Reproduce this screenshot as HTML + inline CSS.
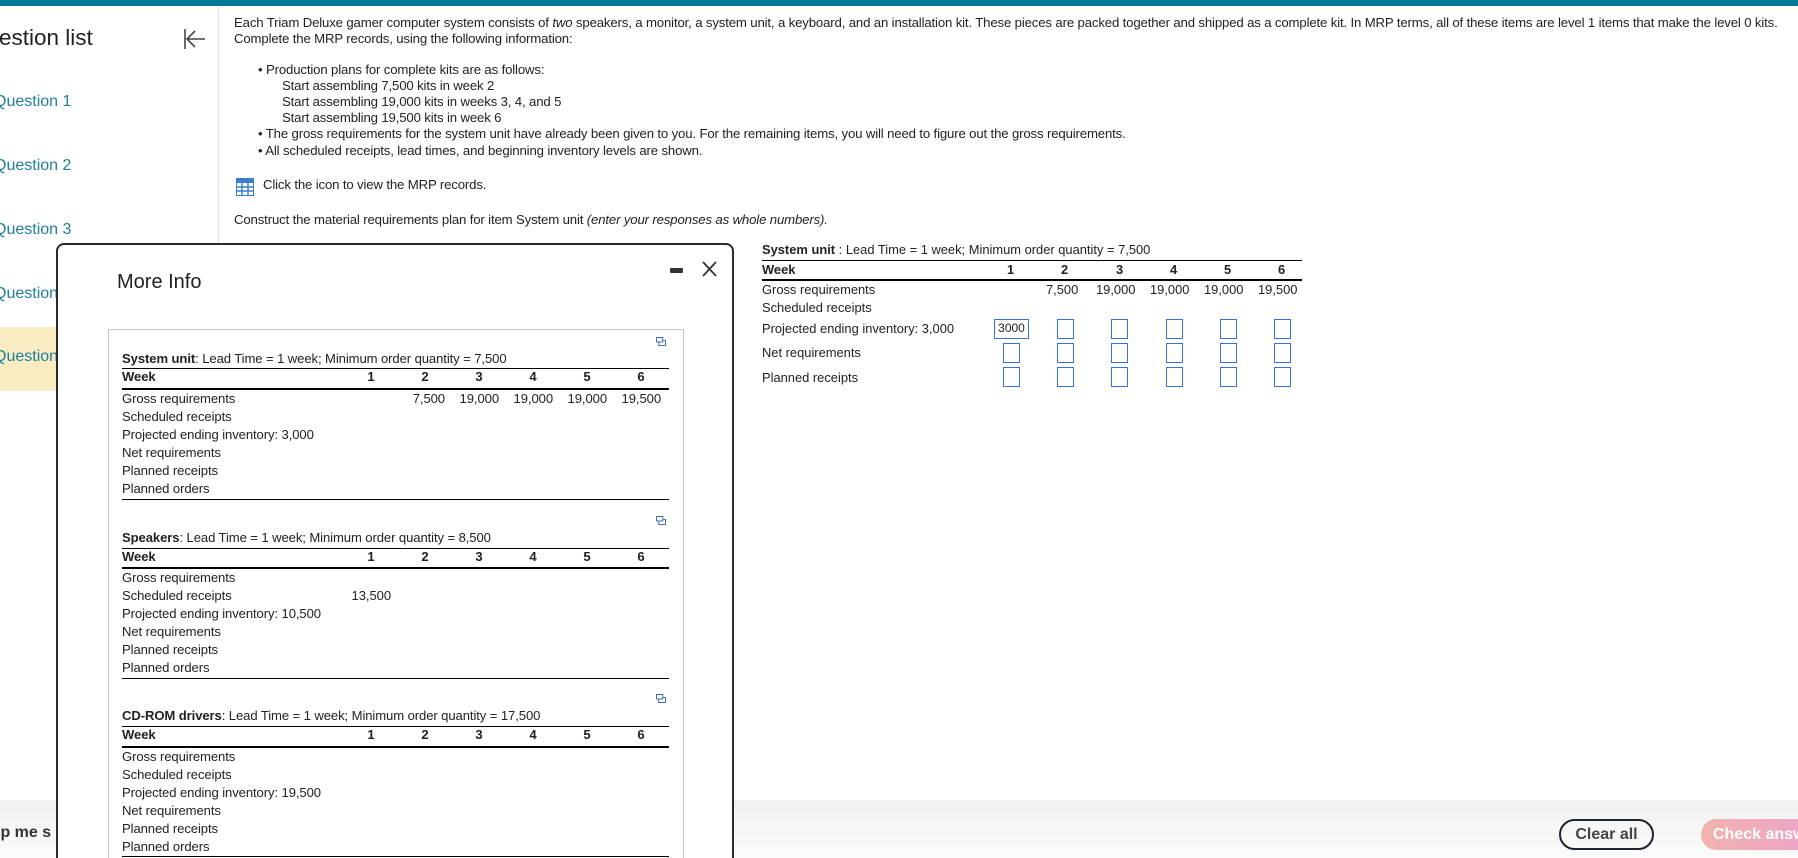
<!DOCTYPE html>
<html><head><meta charset="utf-8"><style>
*{margin:0;padding:0;box-sizing:border-box}
html,body{width:1798px;height:858px;overflow:hidden}
body{background:#fff;font-family:"Liberation Sans",Arial,sans-serif;color:#222;position:relative}
.a{position:absolute;white-space:nowrap}
.t13{font-size:13.2px;letter-spacing:-0.15px}
.q{font-size:16px;color:#1d7ea0;left:-6px}
.row{position:absolute;left:122px;width:539px;height:18px;font-size:13.1px;letter-spacing:-0.1px;display:grid;grid-template-columns:215px repeat(6,54px);line-height:18px}
.row span{text-align:right}
.wk span{text-align:center;padding-left:14px}
.wk{font-weight:bold}
.line{position:absolute;left:122px;width:547px;background:#000}
.ic{position:absolute;width:10px;height:9px}
.box{position:absolute;width:17px;height:20px;border:1.5px solid #3a6fd8;background:#fff}
.r{font-size:12.9px}
</style></head><body>
<div class="a" style="left:0;top:0;width:1798px;height:6px;background:#00789a"></div>
<div class="a" style="left:218px;top:6px;width:1px;height:794px;background:#dde"></div>
<div class="a" style="left:-1px;top:25px;font-size:22.5px;color:#222">estion list</div>
<svg class="a" style="left:183px;top:28px" width="24" height="22" viewBox="0 0 24 22"><path d="M2 1v20M22 11H5M12 3l-8 8 8 8" stroke="#444" stroke-width="1.6" fill="none"/></svg>
<div class="a q" style="top:93px">Question 1</div>
<div class="a q" style="top:157px">Question 2</div>
<div class="a q" style="top:221px">Question 3</div>
<div class="a q" style="top:285px">Question 4</div>
<div class="a" style="left:0;top:327px;width:70px;height:64px;background:#f8ecc0"></div>
<div class="a q" style="top:348px">Question 5</div>
<div class="a" style="left:0;top:800px;width:1798px;height:58px;background:linear-gradient(#f1f1f1,#fbfbfb)"></div>
<div class="a" style="left:-4px;top:824px;font-size:16px;font-weight:bold;color:#333">lp me s</div>
<div class="a" style="left:1559px;top:819px;width:95px;height:31px;border:2px solid #1f2330;border-radius:16px;font-size:16px;font-weight:bold;color:#444;text-align:center;line-height:27px">Clear all</div>
<div class="a" style="left:1701px;top:819px;width:120px;height:31px;border-radius:16px;background:linear-gradient(90deg,#f1b3ad,#eda2cc);font-size:16px;font-weight:bold;color:#fff;padding-left:12px;line-height:31px">Check answer</div>
<div class="a t13" style="left:234px;top:15px">Each Triam Deluxe gamer computer system consists of <i>two</i> speakers, a monitor, a system unit, a keyboard, and an installation kit. These pieces are packed together and shipped as a complete kit. In MRP terms, all of these items are level 1 items that make the level 0 kits.</div>
<div class="a t13" style="left:234px;top:31px">Complete the MRP records, using the following information:</div>
<div class="a t13" style="left:258px;top:62px">• Production plans for complete kits are as follows:</div>
<div class="a t13" style="left:282px;top:78px">Start assembling 7,500 kits in week 2</div>
<div class="a t13" style="left:282px;top:94px">Start assembling 19,000 kits in weeks 3, 4, and 5</div>
<div class="a t13" style="left:282px;top:110px">Start assembling 19,500 kits in week 6</div>
<div class="a t13" style="left:258px;top:126px">• The gross requirements for the system unit have already been given to you. For the remaining items, you will need to figure out the gross requirements.</div>
<div class="a t13" style="left:258px;top:143px">• All scheduled receipts, lead times, and beginning inventory levels are shown.</div>
<svg class="a" style="left:236px;top:178px" width="18" height="18" viewBox="0 0 18 18"><rect x="0.5" y="0.5" width="17" height="17" fill="#fff" stroke="#3a7bd5"/><rect x="0.5" y="0.5" width="17" height="4.5" fill="#3a7bd5"/><path d="M0 9h18M0 13h18M6 5v13M12 5v13" stroke="#3a7bd5" stroke-width="1.4"/></svg>
<div class="a t13" style="left:263px;top:177px">Click the icon to view the MRP records.</div>
<div class="a t13" style="left:234px;top:212px">Construct the material requirements plan for item System unit <i>(enter your responses as whole numbers).</i></div>
<div class="a r" style="left:762px;top:242px"><b>System unit</b> : Lead Time = 1 week; Minimum order quantity = 7,500</div>
<div class="a" style="left:762px;top:260px;width:540px;height:1px;background:#000"></div>
<div class="a" style="left:762px;top:279px;width:540px;height:2px;background:#000"></div>
<div class="a r" style="left:762px;top:262px;font-weight:bold">Week</div>
<div class="a r" style="left:1007px;top:262px;font-weight:bold">1</div>
<div class="a r" style="left:1061px;top:262px;font-weight:bold">2</div>
<div class="a r" style="left:1116px;top:262px;font-weight:bold">3</div>
<div class="a r" style="left:1170px;top:262px;font-weight:bold">4</div>
<div class="a r" style="left:1224px;top:262px;font-weight:bold">5</div>
<div class="a r" style="left:1278px;top:262px;font-weight:bold">6</div>
<div class="a r" style="left:762px;top:282px">Gross requirements</div>
<div class="a r" style="left:1046px;top:282px">7,500</div>
<div class="a r" style="left:1096px;top:282px">19,000</div>
<div class="a r" style="left:1150px;top:282px">19,000</div>
<div class="a r" style="left:1204px;top:282px">19,000</div>
<div class="a r" style="left:1258px;top:282px">19,500</div>
<div class="a r" style="left:762px;top:300px">Scheduled receipts</div>
<div class="a r" style="left:762px;top:321px">Projected ending inventory: 3,000</div>
<div class="a r" style="left:762px;top:345px">Net requirements</div>
<div class="a r" style="left:762px;top:370px">Planned receipts</div>
<div class="box" style="left:994px;top:319px;width:35px;font-size:12px;line-height:16px;text-align:center">3000</div>
<div class="box" style="left:1057px;top:319px"></div><div class="box" style="left:1111px;top:319px"></div><div class="box" style="left:1166px;top:319px"></div><div class="box" style="left:1220px;top:319px"></div><div class="box" style="left:1274px;top:319px"></div>
<div class="box" style="left:1003px;top:343px"></div><div class="box" style="left:1057px;top:343px"></div><div class="box" style="left:1111px;top:343px"></div><div class="box" style="left:1166px;top:343px"></div><div class="box" style="left:1220px;top:343px"></div><div class="box" style="left:1274px;top:343px"></div>
<div class="box" style="left:1003px;top:367px"></div><div class="box" style="left:1057px;top:367px"></div><div class="box" style="left:1111px;top:367px"></div><div class="box" style="left:1166px;top:367px"></div><div class="box" style="left:1220px;top:367px"></div><div class="box" style="left:1274px;top:367px"></div>
<div class="a" style="left:56px;top:243px;width:678px;height:640px;border:2px solid #2b2b2b;border-radius:8px;background:#fff"></div>
<div class="a" style="left:117px;top:271px;font-size:20px;color:#222">More Info</div>
<div class="a" style="left:670px;top:268px;width:13px;height:5px;background:#333;border-radius:1px"></div>
<svg class="a" style="left:702px;top:261px" width="15" height="16" viewBox="0 0 15 16"><path d="M1 1l13 14M14 1L1 15" stroke="#333" stroke-width="1.8"/></svg>
<div class="a" style="left:108px;top:329px;width:576px;height:560px;border:1px solid #c8c8c8"></div>
<svg class="ic" style="left:656px;top:337px" width="11" height="10" viewBox="0 0 11 10"><rect x="0.5" y="0.5" width="7" height="5" fill="#fff" stroke="#2c5fb5"/><path d="M3 6v3.5h7.5V4H8" stroke="#2c5fb5" fill="none"/></svg>
<svg class="ic" style="left:656px;top:516px" width="11" height="10" viewBox="0 0 11 10"><rect x="0.5" y="0.5" width="7" height="5" fill="#fff" stroke="#2c5fb5"/><path d="M3 6v3.5h7.5V4H8" stroke="#2c5fb5" fill="none"/></svg>
<svg class="ic" style="left:656px;top:694px" width="11" height="10" viewBox="0 0 11 10"><rect x="0.5" y="0.5" width="7" height="5" fill="#fff" stroke="#2c5fb5"/><path d="M3 6v3.5h7.5V4H8" stroke="#2c5fb5" fill="none"/></svg>
<div class="a" style="left:122px;top:351px;font-size:13.1px;letter-spacing:-0.1px"><b>System unit</b>: Lead Time = 1 week; Minimum order quantity = 7,500</div>
<div class="line" style="top:368px;height:1px"></div>
<div class="row wk" style="top:368px"><b style="text-align:left">Week</b><span>1</span><span>2</span><span>3</span><span>4</span><span>5</span><span>6</span></div>
<div class="line" style="top:388px;height:2px"></div>
<div class="row" style="top:390px"><div>Gross requirements</div><span></span><span>7,500</span><span>19,000</span><span>19,000</span><span>19,000</span><span>19,500</span></div>
<div class="row" style="top:408px"><div>Scheduled receipts</div></div>
<div class="row" style="top:426px"><div>Projected ending inventory: 3,000</div></div>
<div class="row" style="top:444px"><div>Net requirements</div></div>
<div class="row" style="top:462px"><div>Planned receipts</div></div>
<div class="row" style="top:480px"><div>Planned orders</div></div>
<div class="line" style="top:499px;height:1px"></div>
<div class="a" style="left:122px;top:530px;font-size:13.1px;letter-spacing:-0.1px"><b>Speakers</b>: Lead Time = 1 week; Minimum order quantity = 8,500</div>
<div class="line" style="top:548px;height:1px"></div>
<div class="row wk" style="top:548px"><b style="text-align:left">Week</b><span>1</span><span>2</span><span>3</span><span>4</span><span>5</span><span>6</span></div>
<div class="line" style="top:567px;height:2px"></div>
<div class="row" style="top:569px"><div>Gross requirements</div></div>
<div class="row" style="top:587px"><div>Scheduled receipts</div><span>13,500</span></div>
<div class="row" style="top:605px"><div>Projected ending inventory: 10,500</div></div>
<div class="row" style="top:623px"><div>Net requirements</div></div>
<div class="row" style="top:641px"><div>Planned receipts</div></div>
<div class="row" style="top:659px"><div>Planned orders</div></div>
<div class="line" style="top:678px;height:1px"></div>
<div class="a" style="left:122px;top:708px;font-size:13.1px;letter-spacing:-0.1px"><b>CD-ROM drivers</b>: Lead Time = 1 week; Minimum order quantity = 17,500</div>
<div class="line" style="top:726px;height:1px"></div>
<div class="row wk" style="top:726px"><b style="text-align:left">Week</b><span>1</span><span>2</span><span>3</span><span>4</span><span>5</span><span>6</span></div>
<div class="line" style="top:746px;height:2px"></div>
<div class="row" style="top:748px"><div>Gross requirements</div></div>
<div class="row" style="top:766px"><div>Scheduled receipts</div></div>
<div class="row" style="top:784px"><div>Projected ending inventory: 19,500</div></div>
<div class="row" style="top:802px"><div>Net requirements</div></div>
<div class="row" style="top:820px"><div>Planned receipts</div></div>
<div class="row" style="top:838px"><div>Planned orders</div></div>
<div class="line" style="top:856px;height:1px"></div>
</body></html>
